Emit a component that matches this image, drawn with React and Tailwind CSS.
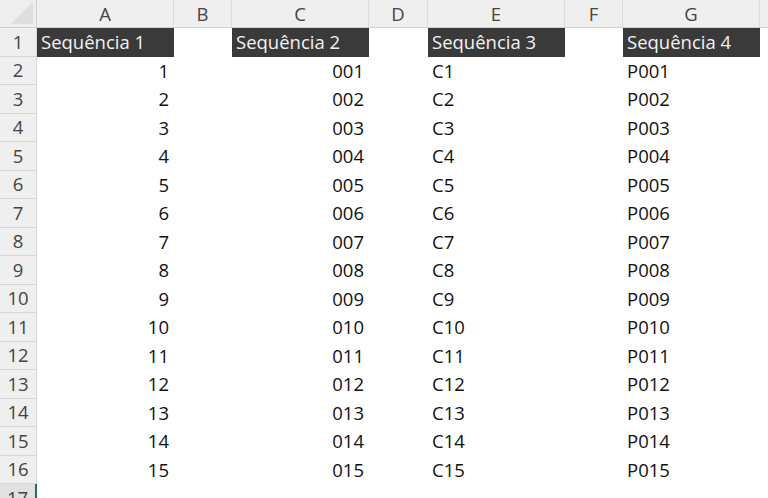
const cols = [
  { key: "A", w: "w-[137px]" },
  { key: "B", w: "w-[58px]" },
  { key: "C", w: "w-[137px]" },
  { key: "D", w: "w-[59px]" },
  { key: "E", w: "w-[137px]" },
  { key: "F", w: "w-[58px]" },
  { key: "G", w: "w-[137px]" },
  { key: "H", w: "w-[60px]" },
];

const pad = (n) => String(n).padStart(3, "0");

const rows = Array.from({ length: 15 }, (_, i) => i + 1);

const Header = ({ children }) => (
  <div className="h-full bg-[#3a3a3a] text-[#f2f2f2] pl-[4px] flex items-center">{children}</div>
);

const App = () => {
  return (
    <div
      className="w-[768px] h-[498px] overflow-hidden bg-white text-[18.5px] text-[#111]"
      style={{ fontFamily: '"Open Sans", "Noto Sans", sans-serif' }}
    >
      {/* column headers */}
      <div className="flex h-[28px] bg-[#efefef] border-b border-[#d1d1d1] text-[#444]">
        <div className="w-[37px] shrink-0 border-r border-[#d1d1d1] relative">
          <svg className="absolute right-[3px] bottom-[3px]" width="22" height="22" viewBox="0 0 22 22">
            <polygon points="22,0 22,22 0,22" fill="#dedede" />
          </svg>
        </div>
        {cols.map((c) => (
          <div
            key={c.key}
            className={`${c.w} shrink-0 border-r border-[#dcdcdc] flex items-center justify-center`}
          >
            {c.key === "H" ? "" : c.key}
          </div>
        ))}
      </div>

      {/* row 1 */}
      <div className="flex h-[28.5px]">
        <div className="w-[37px] shrink-0 bg-[#efefef] border-r border-b border-[#d6d6d6] text-[#444] flex items-center justify-center">
          1
        </div>
        <div className="w-[137px] shrink-0"><Header>Sequência 1</Header></div>
        <div className="w-[58px] shrink-0" />
        <div className="w-[137px] shrink-0"><Header>Sequência 2</Header></div>
        <div className="w-[59px] shrink-0" />
        <div className="w-[137px] shrink-0"><Header>Sequência 3</Header></div>
        <div className="w-[58px] shrink-0" />
        <div className="w-[137px] shrink-0"><Header>Sequência 4</Header></div>
      </div>

      {rows.map((n) => (
        <div key={n} className="flex h-[28.5px]">
          <div className="w-[37px] shrink-0 bg-[#efefef] border-r border-b border-[#d6d6d6] text-[#444] flex items-center justify-center">
            {n + 1}
          </div>
          <div className="w-[137px] shrink-0 flex items-center justify-end pr-[5px]">{n}</div>
          <div className="w-[58px] shrink-0" />
          <div className="w-[137px] shrink-0 flex items-center justify-end pr-[5px]">{pad(n)}</div>
          <div className="w-[59px] shrink-0" />
          <div className="w-[137px] shrink-0 flex items-center pl-[4px]">C{n}</div>
          <div className="w-[58px] shrink-0" />
          <div className="w-[137px] shrink-0 flex items-center pl-[4px]">P{pad(n)}</div>
        </div>
      ))}

      {/* row 17 (active row) */}
      <div className="flex h-[28.5px]">
        <div className="w-[37px] shrink-0 bg-[#e1e1e1] border-r-2 border-[#217346] text-[#444] flex items-center justify-center">
          17
        </div>
      </div>
    </div>
  );
};

export default App;
